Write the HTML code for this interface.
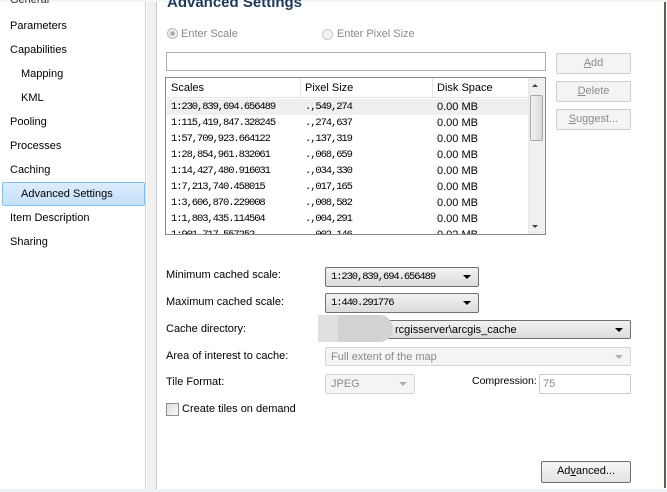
<!DOCTYPE html>
<html><head><style>
*{box-sizing:border-box;margin:0;padding:0}
body{width:667px;height:492px;position:relative;overflow:hidden;background:#fff;font-family:"Liberation Sans",sans-serif;font-size:11px;color:#000}
.a{position:absolute;white-space:nowrap}
.side div{position:absolute;left:10px}
.btn{position:absolute;border:1px solid #adadad;border-radius:2px;background:linear-gradient(#f6f6f6,#e3e3e3);text-align:center;color:#000;line-height:18px}
.dis{color:#8a8a8a;border-color:#cfcfcf;background:#f4f4f4}
.cb{position:absolute;border:1px solid #707070;border-radius:2px;background:linear-gradient(#f2f2f2,#dcdcdc);padding-left:5px;line-height:18px}
.cb:after{content:"";position:absolute;right:7px;top:7px;border:4px solid transparent;border-top:4px solid #000;border-bottom:0}
.cbd{border-color:#d5d5d5;background:#f4f4f4;color:#8a8a8a}
.cbd:after{border-top-color:#b0b0b0}
.mono{font-family:"Liberation Mono",monospace;font-size:10.5px;letter-spacing:-1.1px}
.row{position:absolute;left:1px;width:361px;height:16px;line-height:16px}
.row span{position:absolute}
</style></head><body>
<div class="a" style="left:0;top:0;width:146px;height:492px;background:#fff;border-right:1px solid #cfcfcf"></div>
<div class="a" style="left:147px;top:0;width:10px;height:492px;background:#f0f0f0;border-right:1px solid #c8c8c8"></div>
<div class="a" style="left:664px;top:0;width:2px;height:488px;background:#6e5a4a"></div>
<div class="a" style="left:0;top:489px;width:667px;height:3px;background:#eef1f5"></div>
<div class="a" style="left:0;top:0;width:667px;height:2px;background:#f3f5f8"></div>
<div class="side">
<div style="top:-6px;color:#333">General</div>
<div style="top:20px">Parameters</div>
<div style="top:44px">Capabilities</div>
<div style="top:68px;left:21px">Mapping</div>
<div style="top:92px;left:21px">KML</div>
<div style="top:116px">Pooling</div>
<div style="top:140px">Processes</div>
<div style="top:164px">Caching</div>
<div style="top:182px;left:2px;width:143px;height:24px;background:linear-gradient(#dcecfc,#c4e0fa);border:1px solid #84c2f0;border-radius:2px"></div>
<div style="top:188px;left:21px">Advanced Settings</div>
<div style="top:212px">Item Description</div>
<div style="top:236px">Sharing</div>
</div>
<div class="a" style="left:167px;top:-6px;font-size:15px;font-weight:bold;color:#1e3a5a">Advanced Settings</div>
<div class="a" style="left:167px;top:28px;width:11px;height:11px;border-radius:50%;border:1px solid #bbb;background:radial-gradient(#aaa 30%,#eee 40%)"></div>
<div class="a" style="left:181px;top:28px;color:#8a8a8a">Enter Scale</div>
<div class="a" style="left:322px;top:29px;width:11px;height:11px;border-radius:50%;border:1px solid #ccc;background:#f2f2f2"></div>
<div class="a" style="left:337px;top:28px;color:#8a8a8a">Enter Pixel Size</div>
<div class="a" style="left:166px;top:52px;width:380px;height:19px;border:1px solid #abadb3"></div>
<div class="a" style="left:165px;top:77px;width:381px;height:158px;border:1px solid #828790;overflow:hidden">
<div class="a" style="left:0;top:0;width:362px;height:20px;border-bottom:1px solid #e5e5e5"></div>
<div class="a" style="left:134px;top:0;width:1px;height:20px;background:#e5e5e5"></div>
<div class="a" style="left:266px;top:0;width:1px;height:20px;background:#e5e5e5"></div>
<div class="a" style="left:5px;top:4px">Scales</div>
<div class="a" style="left:139px;top:4px">Pixel Size</div>
<div class="a" style="left:271px;top:4px">Disk Space</div>
<div class="row" style="top:21px;background:#efefef"><span class="mono" style="left:4px">1:230,839,694.656489</span><span class="mono" style="left:138px">.,549,274</span><span style="left:270px">0.00 MB</span></div>
<div class="row" style="top:37px"><span class="mono" style="left:4px">1:115,419,847.328245</span><span class="mono" style="left:138px">.,274,637</span><span style="left:270px">0.00 MB</span></div>
<div class="row" style="top:53px"><span class="mono" style="left:4px">1:57,709,923.664122</span><span class="mono" style="left:138px">.,137,319</span><span style="left:270px">0.00 MB</span></div>
<div class="row" style="top:69px"><span class="mono" style="left:4px">1:28,854,961.832061</span><span class="mono" style="left:138px">.,068,659</span><span style="left:270px">0.00 MB</span></div>
<div class="row" style="top:85px"><span class="mono" style="left:4px">1:14,427,480.916031</span><span class="mono" style="left:138px">.,034,330</span><span style="left:270px">0.00 MB</span></div>
<div class="row" style="top:101px"><span class="mono" style="left:4px">1:7,213,740.458015</span><span class="mono" style="left:138px">.,017,165</span><span style="left:270px">0.00 MB</span></div>
<div class="row" style="top:117px"><span class="mono" style="left:4px">1:3,606,870.229008</span><span class="mono" style="left:138px">.,008,582</span><span style="left:270px">0.00 MB</span></div>
<div class="row" style="top:133px"><span class="mono" style="left:4px">1:1,803,435.114504</span><span class="mono" style="left:138px">.,004,291</span><span style="left:270px">0.00 MB</span></div>
<div class="row" style="top:149px"><span class="mono" style="left:4px">1:901,717.557252</span><span class="mono" style="left:138px">.,002,146</span><span style="left:270px">0.02 MB</span></div>
<div class="a" style="left:362px;top:0;width:17px;height:156px;background:#f0f0f0;border-left:1px solid #e8e8e8"></div>
<div class="a" style="left:366px;top:6px;border:3px solid transparent;border-bottom:3px solid #444;border-top:0"></div>
<div class="a" style="left:366px;top:147px;border:3px solid transparent;border-top:3px solid #444;border-bottom:0"></div>
<div class="a" style="left:364px;top:17px;width:13px;height:46px;border:1px solid #a8a8a8;border-radius:2px;background:linear-gradient(90deg,#f0f0f0,#dadada)"></div>
</div>
<div class="btn dis" style="left:556px;top:53px;width:75px;height:21px"><u>A</u>dd</div>
<div class="btn dis" style="left:556px;top:81px;width:75px;height:21px"><u>D</u>elete</div>
<div class="btn dis" style="left:556px;top:109px;width:75px;height:21px"><u>S</u>uggest...</div>
<div class="a" style="left:166px;top:269px">Minimum cached scale:</div>
<div class="a" style="left:166px;top:296px">Maximum cached scale:</div>
<div class="a" style="left:166px;top:323px">Cache directory:</div>
<div class="a" style="left:166px;top:350px">Area of interest to cache:</div>
<div class="a" style="left:166px;top:376px">Tile Format:</div>
<div class="cb mono" style="left:325px;top:267px;width:154px;height:20px">1:230,839,694.656489</div>
<div class="cb mono" style="left:325px;top:293px;width:154px;height:20px">1:440.291776</div>
<div class="cb" style="left:325px;top:320px;width:306px;height:19px;padding-left:69px">rcgisserver\arcgis_cache</div>
<div class="a" style="left:318px;top:315px;width:75px;height:27px;background:#d2d2d2;border-radius:0 14px 14px 0"></div>
<div class="a" style="left:318px;top:315px;width:20px;height:27px;background:#e0e0e0"></div>
<div class="cb cbd" style="left:325px;top:347px;width:306px;height:19px">Full extent of the map</div>
<div class="cb cbd" style="left:325px;top:374px;width:90px;height:20px">JPEG</div>
<div class="a" style="left:472px;top:375px;font-size:10.5px">Compression:</div>
<div class="a" style="left:539px;top:374px;width:92px;height:20px;border:1px solid #ccc;color:#8a8a8a;padding:3px 3px">75</div>
<div class="a" style="left:166px;top:403px;width:13px;height:13px;border:1px solid #8f8f8f;background:linear-gradient(135deg,#ddd,#f8f8f8)"></div>
<div class="a" style="left:182px;top:403px">Create tiles on demand</div>
<div class="btn" style="left:541px;top:461px;width:90px;height:22px;border-color:#707070">Ad<u>v</u>anced...</div>
</body></html>
